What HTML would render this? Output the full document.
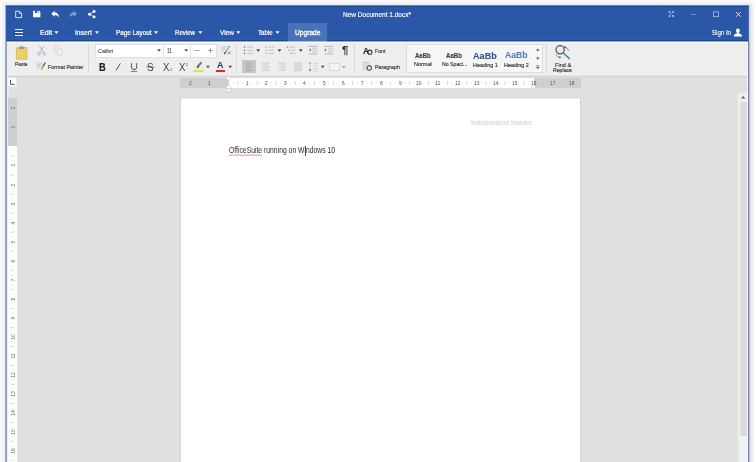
<!DOCTYPE html>
<html lang="en"><head><meta charset="utf-8"><title>New Document 1.docx - OfficeSuite</title>
<style>
html,body{margin:0;padding:0}
body{width:756px;height:462px;overflow:hidden;position:relative;background:#fbfbfb;font-family:"Liberation Sans", sans-serif}
.a{position:absolute}
.t{position:absolute;white-space:nowrap;transform-origin:0 0;display:block}
.sep{position:absolute;width:1px;top:44px;height:29px;background:#d9d9d9}
svg{position:absolute;overflow:visible}
</style></head><body>
<div class="a" style="left:0;top:0;width:5px;height:462px;background:linear-gradient(90deg,#fcf8f8 0px,#fcf8f8 1px,#fafafa 1px,#fafafa 2px,#f1f6fc 2px,#f1f6fc 3px,#ebf2fb 3px,#ebf2fb 4px,#e8f0f8 4px,#e8f0f8 5px)"></div>
<div class="a" style="left:750px;top:0;width:6px;height:462px;background:linear-gradient(90deg,#e0e4ea 0px,#e0e4ea 1px,#e9ecec 1px,#e9ecec 2px,#f0f2f2 2px,#f0f2f2 3px,#f6f6f6 3px,#f6f6f6 4px,#fbfbfb 4px,#fbfbfb 5px,#ffffff 5px,#ffffff 6px)"></div>
<div class="a" style="left:3px;top:0;width:749px;height:5px;background:linear-gradient(180deg,#fdf9fd 0px,#fdf9fd 1px,#fbf8f8 1px,#fbf8f8 2px,#f3f6ec 2px,#f3f6ec 3px,#eaf4f8 3px,#eaf4f8 4px,#e2f0fc 4px,#e2f0fc 5px)"></div>
<div class="a" style="left:0;top:0;width:3px;height:5px;background:#fcfafb"></div><div class="a" style="left:752px;top:0;width:4px;height:5px;background:#fcfcfc"></div>
<div id="win" class="a" style="left:5px;top:5px;width:745px;height:457px;background:#e0e0e0"></div>
<div id="titlebar" class="a" style="left:5px;top:5px;width:745px;height:37px;background:linear-gradient(180deg,#6a84b6 0,#6a84b6 1px,#274c9a 1px,#274c9a 2px,#2a57a7 2px,#2a57a7 33px,#2b5bb0 33px,#2b5bb0 35px,#21468e 35px,#21468e 36px,#8fa6d2 36px)"></div>
<div class="a" style="left:5px;top:5px;width:1px;height:37px;background:#9db0d2"></div>
<div class="a" style="left:748px;top:5px;width:1px;height:37px;background:#4f68a8"></div>
<div class="a" style="left:749px;top:5px;width:1px;height:37px;background:#c6d0ee"></div>
<div id="tab-upgrade" class="a" style="left:288px;top:23px;width:39px;height:18px;background:#4a72b8"></div>
<div class="a" style="left:288px;top:41px;width:39px;height:1px;background:#a5b8dc"></div>
<div id="ribbon" class="a" style="left:7px;top:42px;width:740px;height:33px;background:linear-gradient(180deg,#f9fbfb 0,#f9fbfb 1px,#eeeeee 1px,#eeeeee 32px,#f2f2f2 32px)"></div>
<div class="a" style="left:7px;top:75px;width:740px;height:1px;background:#e4e4e4"></div>
<div class="a" style="left:7px;top:76px;width:740px;height:1px;background:#d4d4d4"></div>
<div class="a" style="left:7px;top:77px;width:740px;height:1px;background:#dedede"></div>
<div class="a" style="left:5px;top:42px;width:3px;height:420px;background:linear-gradient(90deg,#a0aebf 0px,#a0aebf 1px,#92a1b6 1px,#92a1b6 2px,#e8ecf3 2px,#e8ecf3 3px)"></div>
<div class="a" style="left:8px;top:78px;width:1px;height:384px;background:#ebebed"></div>
<div class="a" style="left:747px;top:42px;width:3px;height:420px;background:linear-gradient(90deg,#f6fafa 0px,#f6fafa 1px,#7c81a6 1px,#7c81a6 2px,#b9bddc 2px,#b9bddc 3px)"></div>
<div id="vscroll" class="a" style="left:737px;top:93px;width:10px;height:369px;background:linear-gradient(90deg,#e6e4e4 0px,#e6e4e4 1px,#ebebe8 1px,#ebebe8 2px,#efeee9 2px,#efeee9 3px,#e4e4dd 3px,#e4e4dd 4px,#dbdbdf 4px,#dbdbdf 5px,#dbdbdf 5px,#dbdbdf 6px,#dbdbdf 6px,#dbdbdf 7px,#dbdbdf 7px,#dbdbdf 8px,#dbdbdf 8px,#dbdbdf 9px,#dbdbdf 9px,#dbdbdf 10px)"></div>
<div class="a" style="left:740px;top:436px;width:7px;height:26px;background:#f0f0f7"></div>
<div class="a" style="left:738px;top:93px;width:9px;height:9px;background:#efefef"></div><svg style="left:741.4px;top:95.8px" width="4.4" height="2.6" viewBox="0 0 4.4 2.6"><path d="M0 2.6 L2.2 0.1 L4.4 2.6Z" fill="#606060"/></svg>
<div id="hruler" class="a" style="left:180px;top:78px;width:401px;height:10px;background:linear-gradient(90deg,#cfcfcf 0,#cfcfcf 48.6px,#fff 48.6px,#fff 353.6px,#cfcfcf 353.6px)"></div>
<div id="vruler" class="a" style="left:8px;top:98px;width:9px;height:364px;background:linear-gradient(180deg,#cfcfcf 0,#cfcfcf 48px,#fff 48px)"></div>
<div id="tabsel" class="a" style="left:8px;top:78px;width:9px;height:9px;background:#fdfdfd;border-bottom:1px solid #e6e6e6;border-right:1px solid #ededed;box-sizing:border-box"></div>
<svg style="left:9px;top:79px" width="7" height="7" viewBox="0 0 7 7"><path d="M1.5 0.8 V5.4 H5.7" fill="none" stroke="#4a4a4a" stroke-width="0.9"/></svg>
<svg style="left:0;top:0" width="756" height="462" viewBox="0 0 756 462"><rect x="185.34" y="82.4" width="0.8" height="1.2" fill="#c4c4c4" opacity="0.6"/><rect x="194.86" y="82.4" width="0.8" height="1.2" fill="#c4c4c4" opacity="0.6"/><rect x="199.62" y="81.2" width="0.8" height="3.6" fill="#b9b9b9" opacity="0.7"/><rect x="204.39" y="82.4" width="0.8" height="1.2" fill="#c4c4c4" opacity="0.6"/><rect x="213.91" y="82.4" width="0.8" height="1.2" fill="#c4c4c4" opacity="0.6"/><rect x="218.67" y="81.2" width="0.8" height="3.6" fill="#b9b9b9" opacity="0.7"/><rect x="223.44" y="82.4" width="0.8" height="1.2" fill="#c4c4c4" opacity="0.6"/><rect x="232.96" y="82.4" width="0.8" height="1.2" fill="#c4c4c4" opacity="0.6"/><rect x="237.72" y="81.2" width="0.8" height="3.6" fill="#b9b9b9" opacity="0.7"/><rect x="242.49" y="82.4" width="0.8" height="1.2" fill="#c4c4c4" opacity="0.6"/><rect x="252.01" y="82.4" width="0.8" height="1.2" fill="#c4c4c4" opacity="0.6"/><rect x="256.78" y="81.2" width="0.8" height="3.6" fill="#b9b9b9" opacity="0.7"/><rect x="261.54" y="82.4" width="0.8" height="1.2" fill="#c4c4c4" opacity="0.6"/><rect x="271.06" y="82.4" width="0.8" height="1.2" fill="#c4c4c4" opacity="0.6"/><rect x="275.83" y="81.2" width="0.8" height="3.6" fill="#b9b9b9" opacity="0.7"/><rect x="280.59" y="82.4" width="0.8" height="1.2" fill="#c4c4c4" opacity="0.6"/><rect x="290.11" y="82.4" width="0.8" height="1.2" fill="#c4c4c4" opacity="0.6"/><rect x="294.88" y="81.2" width="0.8" height="3.6" fill="#b9b9b9" opacity="0.7"/><rect x="299.64" y="82.4" width="0.8" height="1.2" fill="#c4c4c4" opacity="0.6"/><rect x="309.16" y="82.4" width="0.8" height="1.2" fill="#c4c4c4" opacity="0.6"/><rect x="313.93" y="81.2" width="0.8" height="3.6" fill="#b9b9b9" opacity="0.7"/><rect x="318.69" y="82.4" width="0.8" height="1.2" fill="#c4c4c4" opacity="0.6"/><rect x="328.21" y="82.4" width="0.8" height="1.2" fill="#c4c4c4" opacity="0.6"/><rect x="332.98" y="81.2" width="0.8" height="3.6" fill="#b9b9b9" opacity="0.7"/><rect x="337.74" y="82.4" width="0.8" height="1.2" fill="#c4c4c4" opacity="0.6"/><rect x="347.26" y="82.4" width="0.8" height="1.2" fill="#c4c4c4" opacity="0.6"/><rect x="352.03" y="81.2" width="0.8" height="3.6" fill="#b9b9b9" opacity="0.7"/><rect x="356.79" y="82.4" width="0.8" height="1.2" fill="#c4c4c4" opacity="0.6"/><rect x="366.31" y="82.4" width="0.8" height="1.2" fill="#c4c4c4" opacity="0.6"/><rect x="371.08" y="81.2" width="0.8" height="3.6" fill="#b9b9b9" opacity="0.7"/><rect x="375.84" y="82.4" width="0.8" height="1.2" fill="#c4c4c4" opacity="0.6"/><rect x="385.36" y="82.4" width="0.8" height="1.2" fill="#c4c4c4" opacity="0.6"/><rect x="390.12" y="81.2" width="0.8" height="3.6" fill="#b9b9b9" opacity="0.7"/><rect x="394.89" y="82.4" width="0.8" height="1.2" fill="#c4c4c4" opacity="0.6"/><rect x="404.41" y="82.4" width="0.8" height="1.2" fill="#c4c4c4" opacity="0.6"/><rect x="409.18" y="81.2" width="0.8" height="3.6" fill="#b9b9b9" opacity="0.7"/><rect x="413.94" y="82.4" width="0.8" height="1.2" fill="#c4c4c4" opacity="0.6"/><rect x="423.46" y="82.4" width="0.8" height="1.2" fill="#c4c4c4" opacity="0.6"/><rect x="428.23" y="81.2" width="0.8" height="3.6" fill="#b9b9b9" opacity="0.7"/><rect x="432.99" y="82.4" width="0.8" height="1.2" fill="#c4c4c4" opacity="0.6"/><rect x="442.51" y="82.4" width="0.8" height="1.2" fill="#c4c4c4" opacity="0.6"/><rect x="447.28" y="81.2" width="0.8" height="3.6" fill="#b9b9b9" opacity="0.7"/><rect x="452.04" y="82.4" width="0.8" height="1.2" fill="#c4c4c4" opacity="0.6"/><rect x="461.56" y="82.4" width="0.8" height="1.2" fill="#c4c4c4" opacity="0.6"/><rect x="466.33" y="81.2" width="0.8" height="3.6" fill="#b9b9b9" opacity="0.7"/><rect x="471.09" y="82.4" width="0.8" height="1.2" fill="#c4c4c4" opacity="0.6"/><rect x="480.61" y="82.4" width="0.8" height="1.2" fill="#c4c4c4" opacity="0.6"/><rect x="485.38" y="81.2" width="0.8" height="3.6" fill="#b9b9b9" opacity="0.7"/><rect x="490.14" y="82.4" width="0.8" height="1.2" fill="#c4c4c4" opacity="0.6"/><rect x="499.66" y="82.4" width="0.8" height="1.2" fill="#c4c4c4" opacity="0.6"/><rect x="504.43" y="81.2" width="0.8" height="3.6" fill="#b9b9b9" opacity="0.7"/><rect x="509.19" y="82.4" width="0.8" height="1.2" fill="#c4c4c4" opacity="0.6"/><rect x="518.71" y="82.4" width="0.8" height="1.2" fill="#c4c4c4" opacity="0.6"/><rect x="523.48" y="81.2" width="0.8" height="3.6" fill="#b9b9b9" opacity="0.7"/><rect x="528.24" y="82.4" width="0.8" height="1.2" fill="#c4c4c4" opacity="0.6"/><rect x="537.76" y="82.4" width="0.8" height="1.2" fill="#c4c4c4" opacity="0.6"/><rect x="542.52" y="81.2" width="0.8" height="3.6" fill="#b9b9b9" opacity="0.7"/><rect x="547.29" y="82.4" width="0.8" height="1.2" fill="#c4c4c4" opacity="0.6"/><rect x="556.81" y="82.4" width="0.8" height="1.2" fill="#c4c4c4" opacity="0.6"/><rect x="561.58" y="81.2" width="0.8" height="3.6" fill="#b9b9b9" opacity="0.7"/><rect x="566.34" y="82.4" width="0.8" height="1.2" fill="#c4c4c4" opacity="0.6"/><rect x="575.86" y="82.4" width="0.8" height="1.2" fill="#c4c4c4" opacity="0.6"/><rect x="11.9" y="103.14" width="1.2" height="0.8" fill="#c8c8c8" opacity="0.6"/><rect x="11.9" y="112.66" width="1.2" height="0.8" fill="#c8c8c8" opacity="0.6"/><rect x="10.7" y="117.42" width="3.6" height="0.8" fill="#bdbdbd" opacity="0.7"/><rect x="11.9" y="122.19" width="1.2" height="0.8" fill="#c8c8c8" opacity="0.6"/><rect x="11.9" y="131.71" width="1.2" height="0.8" fill="#c8c8c8" opacity="0.6"/><rect x="10.7" y="136.47" width="3.6" height="0.8" fill="#bdbdbd" opacity="0.7"/><rect x="11.9" y="141.24" width="1.2" height="0.8" fill="#c8c8c8" opacity="0.6"/><rect x="11.9" y="150.76" width="1.2" height="0.8" fill="#c8c8c8" opacity="0.6"/><rect x="10.7" y="155.53" width="3.6" height="0.8" fill="#bdbdbd" opacity="0.7"/><rect x="11.9" y="160.29" width="1.2" height="0.8" fill="#c8c8c8" opacity="0.6"/><rect x="11.9" y="169.81" width="1.2" height="0.8" fill="#c8c8c8" opacity="0.6"/><rect x="10.7" y="174.58" width="3.6" height="0.8" fill="#bdbdbd" opacity="0.7"/><rect x="11.9" y="179.34" width="1.2" height="0.8" fill="#c8c8c8" opacity="0.6"/><rect x="11.9" y="188.86" width="1.2" height="0.8" fill="#c8c8c8" opacity="0.6"/><rect x="10.7" y="193.62" width="3.6" height="0.8" fill="#bdbdbd" opacity="0.7"/><rect x="11.9" y="198.39" width="1.2" height="0.8" fill="#c8c8c8" opacity="0.6"/><rect x="11.9" y="207.91" width="1.2" height="0.8" fill="#c8c8c8" opacity="0.6"/><rect x="10.7" y="212.67" width="3.6" height="0.8" fill="#bdbdbd" opacity="0.7"/><rect x="11.9" y="217.44" width="1.2" height="0.8" fill="#c8c8c8" opacity="0.6"/><rect x="11.9" y="226.96" width="1.2" height="0.8" fill="#c8c8c8" opacity="0.6"/><rect x="10.7" y="231.72" width="3.6" height="0.8" fill="#bdbdbd" opacity="0.7"/><rect x="11.9" y="236.49" width="1.2" height="0.8" fill="#c8c8c8" opacity="0.6"/><rect x="11.9" y="246.01" width="1.2" height="0.8" fill="#c8c8c8" opacity="0.6"/><rect x="10.7" y="250.78" width="3.6" height="0.8" fill="#bdbdbd" opacity="0.7"/><rect x="11.9" y="255.54" width="1.2" height="0.8" fill="#c8c8c8" opacity="0.6"/><rect x="11.9" y="265.06" width="1.2" height="0.8" fill="#c8c8c8" opacity="0.6"/><rect x="10.7" y="269.83" width="3.6" height="0.8" fill="#bdbdbd" opacity="0.7"/><rect x="11.9" y="274.59" width="1.2" height="0.8" fill="#c8c8c8" opacity="0.6"/><rect x="11.9" y="284.11" width="1.2" height="0.8" fill="#c8c8c8" opacity="0.6"/><rect x="10.7" y="288.88" width="3.6" height="0.8" fill="#bdbdbd" opacity="0.7"/><rect x="11.9" y="293.64" width="1.2" height="0.8" fill="#c8c8c8" opacity="0.6"/><rect x="11.9" y="303.16" width="1.2" height="0.8" fill="#c8c8c8" opacity="0.6"/><rect x="10.7" y="307.93" width="3.6" height="0.8" fill="#bdbdbd" opacity="0.7"/><rect x="11.9" y="312.69" width="1.2" height="0.8" fill="#c8c8c8" opacity="0.6"/><rect x="11.9" y="322.21" width="1.2" height="0.8" fill="#c8c8c8" opacity="0.6"/><rect x="10.7" y="326.98" width="3.6" height="0.8" fill="#bdbdbd" opacity="0.7"/><rect x="11.9" y="331.74" width="1.2" height="0.8" fill="#c8c8c8" opacity="0.6"/><rect x="11.9" y="341.26" width="1.2" height="0.8" fill="#c8c8c8" opacity="0.6"/><rect x="10.7" y="346.03" width="3.6" height="0.8" fill="#bdbdbd" opacity="0.7"/><rect x="11.9" y="350.79" width="1.2" height="0.8" fill="#c8c8c8" opacity="0.6"/><rect x="11.9" y="360.31" width="1.2" height="0.8" fill="#c8c8c8" opacity="0.6"/><rect x="10.7" y="365.08" width="3.6" height="0.8" fill="#bdbdbd" opacity="0.7"/><rect x="11.9" y="369.84" width="1.2" height="0.8" fill="#c8c8c8" opacity="0.6"/><rect x="11.9" y="379.36" width="1.2" height="0.8" fill="#c8c8c8" opacity="0.6"/><rect x="10.7" y="384.12" width="3.6" height="0.8" fill="#bdbdbd" opacity="0.7"/><rect x="11.9" y="388.89" width="1.2" height="0.8" fill="#c8c8c8" opacity="0.6"/><rect x="11.9" y="398.41" width="1.2" height="0.8" fill="#c8c8c8" opacity="0.6"/><rect x="10.7" y="403.18" width="3.6" height="0.8" fill="#bdbdbd" opacity="0.7"/><rect x="11.9" y="407.94" width="1.2" height="0.8" fill="#c8c8c8" opacity="0.6"/><rect x="11.9" y="417.46" width="1.2" height="0.8" fill="#c8c8c8" opacity="0.6"/><rect x="10.7" y="422.23" width="3.6" height="0.8" fill="#bdbdbd" opacity="0.7"/><rect x="11.9" y="426.99" width="1.2" height="0.8" fill="#c8c8c8" opacity="0.6"/><rect x="11.9" y="436.51" width="1.2" height="0.8" fill="#c8c8c8" opacity="0.6"/><rect x="10.7" y="441.28" width="3.6" height="0.8" fill="#bdbdbd" opacity="0.7"/><rect x="11.9" y="446.04" width="1.2" height="0.8" fill="#c8c8c8" opacity="0.6"/><rect x="11.9" y="455.56" width="1.2" height="0.8" fill="#c8c8c8" opacity="0.6"/><rect x="10.7" y="460.33" width="3.6" height="0.8" fill="#bdbdbd" opacity="0.7"/><path d="M226.3 76.6 H230.9 V78.4 L228.6 80.6 L226.3 78.4Z" fill="#fff" stroke="#c4c4c4" stroke-width="0.6"/><path d="M226.3 88.6 V87 L228.6 84.9 L230.9 87 V88.6Z" fill="#fff" stroke="#c4c4c4" stroke-width="0.6"/><rect x="226.3" y="89" width="4.6" height="2.8" fill="#fff" stroke="#c4c4c4" stroke-width="0.6"/><path d="M531.2 88.4 V87 L533.5 84.9 L535.8 87 V88.4Z" fill="#fff" stroke="#c4c4c4" stroke-width="0.6"/></svg>
<div id="page" class="a" style="left:181px;top:99px;width:399px;height:363px;background:#fff"></div>
<div class="a" style="left:180px;top:97px;width:401px;height:1px;background:#dadada"></div>
<div class="a" style="left:181px;top:98px;width:399px;height:1px;background:#eeeeee"></div>
<div class="a" style="left:180px;top:98px;width:1px;height:364px;background:#d4d4d4"></div>
<div class="a" style="left:580px;top:98px;width:1px;height:364px;background:#d4d4d4"></div>
<svg style="left:229px;top:154.4px" width="34" height="3" viewBox="0 0 34 3"><path d="M0 2 L1.0 0.5 L2.0 2.0 L3.0 0.5 L4.0 2.0 L5.0 0.5 L6.0 2.0 L7.0 0.5 L8.0 2.0 L9.0 0.5 L10.0 2.0 L11.0 0.5 L12.0 2.0 L13.0 0.5 L14.0 2.0 L15.0 0.5 L16.0 2.0 L17.0 0.5 L18.0 2.0 L19.0 0.5 L20.0 2.0 L21.0 0.5 L22.0 2.0 L23.0 0.5 L24.0 2.0 L25.0 0.5 L26.0 2.0 L27.0 0.5 L28.0 2.0 L29.0 0.5 L30.0 2.0 L31.0 0.5 L32.0 2.0 L33.0 0.5" fill="none" stroke="#e03c3c" stroke-width="0.6" stroke-dasharray="1.2 0.5"/></svg>
<div class="a" style="left:305.4px;top:145.5px;width:1px;height:10.5px;background:#555"></div>
<div class="sep" style="left:88px"></div>
<div class="sep" style="left:236px"></div>
<div class="sep" style="left:354px"></div>
<div class="sep" style="left:546px"></div>
<div id="fontbox" class="a" style="left:95px;top:44px;width:122px;height:13.5px;background:#fff;border:1px solid #e0e0e0;box-sizing:border-box"></div>
<div class="a" style="left:163px;top:45px;width:1px;height:11.5px;background:#e3e3e3"></div>
<div class="a" style="left:190px;top:45px;width:1px;height:11.5px;background:#e3e3e3"></div>
<div id="gallery" class="a" style="left:406px;top:43.5px;width:137px;height:29.5px;background:#f6f6f6;border:1px solid #dedede;box-sizing:border-box"></div>
<div class="a" style="left:242.4px;top:59.8px;width:14px;height:13.2px;background:#c7c7c7"></div>
<div class="a" style="left:329px;top:62.5px;width:10.5px;height:8.5px;background:#f6f6f6;border:1px solid #d9d9d9;box-sizing:border-box"></div>
<svg id="icons" style="left:0;top:0" width="756" height="462" viewBox="0 0 756 462">
<g fill="none" stroke="#fff" stroke-width="0.9" opacity="0.92"><path d="M15.7 11.2 H19.4 L21.6 13.4 V17.6 H15.7Z"/><path d="M19.3 11.3 V13.5 H21.5" stroke-width="0.7"/></g>
<path d="M33.1 10.7 H39.2 L40.4 11.9 V17.3 H33.1Z M35 10.7 V13 H38.4 V10.7Z" fill="#fff" fill-rule="evenodd"/><rect x="36.9" y="11" width="0.9" height="1.6" fill="#fff"/>
<path transform="translate(51.20,10.7)" d="M0 3 L3.5 0 V1.9 C6.3 1.9 7.8 4 7.8 6.8 C6.9 5 5.6 4.2 3.5 4.2 V6 Z" fill="#fff"/>
<path transform="translate(77.10,10.7) scale(-1,1)" d="M0 3 L3.5 0 V1.9 C6.3 1.9 7.8 4 7.8 6.8 C6.9 5 5.6 4.2 3.5 4.2 V6 Z" fill="#819cd0"/>
<g fill="#fff"><circle cx="94.1" cy="11.5" r="1.45"/><circle cx="89.5" cy="14.2" r="1.45"/><circle cx="94.1" cy="16.9" r="1.45"/></g><path d="M94.1 11.5 L89.5 14.2 L94.1 16.9" fill="none" stroke="#fff" stroke-width="0.8"/>
<path d="M15 29.5 H23 M15 32.4 H23 M15 35.4 H23" stroke="#fff" stroke-width="1.05" opacity="0.92"/>
<path d="M54.30 31.25 L58.50 31.25 L56.40 33.95Z" fill="#fff" opacity="0.95"/>
<path d="M94.90 31.25 L99.10 31.25 L97.00 33.95Z" fill="#fff" opacity="0.95"/>
<path d="M153.90 31.25 L158.10 31.25 L156.00 33.95Z" fill="#fff" opacity="0.95"/>
<path d="M198.20 31.25 L202.40 31.25 L200.30 33.95Z" fill="#fff" opacity="0.95"/>
<path d="M236.20 31.25 L240.40 31.25 L238.30 33.95Z" fill="#fff" opacity="0.95"/>
<path d="M275.40 31.25 L279.60 31.25 L277.50 33.95Z" fill="#fff" opacity="0.95"/>
<g stroke="#fff" stroke-width="0.8" opacity="0.85" fill="none"><path d="M669.2 11.8 L670.8 13.4 M673.4 11.8 L671.8 13.4 M669.2 16.4 L670.8 14.8 M673.4 16.4 L671.8 14.8"/><path d="M669 13 V11.6 H670.4 M672.2 11.6 H673.6 V13 M669 15.2 V16.6 H670.4 M672.2 16.6 H673.6 V15.2" stroke-width="0.6"/></g>
<path d="M691 14.4 H696" stroke="#fff" stroke-width="0.7" opacity="0.55"/>
<rect x="713.5" y="11.9" width="4.8" height="4.8" fill="none" stroke="#fff" stroke-width="0.7" opacity="0.7"/>
<path d="M736 12 L740.8 16.8 M740.8 12 L736 16.8" stroke="#fff" stroke-width="0.9" opacity="0.9"/>
<g fill="#fff"><ellipse cx="737.9" cy="30.7" rx="1.9" ry="2.2"/><path d="M733.7 36.5 C733.7 34.3 735.4 33.9 736.8 33.5 L737.9 32.5 L739 33.5 C740.4 33.9 742.1 34.3 742.1 36.5Z"/></g>
<rect x="16.4" y="47.6" width="10.5" height="11.7" rx="0.6" fill="#ecd066" stroke="#c8b25a" stroke-width="0.7"/>
<path d="M19 49 V47.2 H20.4 V45.9 H22.9 V47.2 H24.3 V49Z" fill="#9b9b9b"/>
<g fill="none" stroke="#97a3b6" stroke-width="0.75"><path d="M39.3 45.9 L43.9 52.8 M44.1 45.9 L39.5 52.8"/><circle cx="39.1" cy="53.7" r="1.35"/><circle cx="44.3" cy="53.7" r="1.35"/></g>
<g fill="#efefef" stroke="#d2d2d2" stroke-width="0.8"><path d="M54.7 46.4 H58.3 L59.8 47.9 V52.6 H54.7Z"/><path d="M57.2 49 H60.6 L62 50.5 V55.2 H57.2Z"/></g>
<g stroke="#a9b7cf" stroke-width="0.7" fill="none"><path d="M36.8 63 H42.4 M36.8 64.6 H41.2 M36.8 66.2 H40.2 M36.8 67.8 H39.4"/></g>
<path d="M45.4 62.6 L42 67.6" stroke="#4a4a4a" stroke-width="1.1"/><path d="M42.3 67 L40.4 70.4 L43.4 68.3Z" fill="#eaa637"/><path d="M43.2 66.2 L41.4 69.4" stroke="#eaa637" stroke-width="1.7"/>
<path d="M157.05 49.15 L160.95 49.15 L159.00 51.65Z" fill="#505050" opacity="1"/>
<path d="M184.25 49.15 L188.15 49.15 L186.20 51.65Z" fill="#505050" opacity="1"/>
<path d="M194.3 50.5 H199.6 M207.9 50.5 H213 M210.45 47.9 V53.1" stroke="#808080" stroke-width="0.7"/>
<path d="M221.2 47 H226.6 M221.2 48.9 H225.6 M221.2 50.8 H224.4" stroke="#b2b2b2" stroke-width="0.7"/>
<path d="M229.6 45.9 L225 53.3" stroke="#777" stroke-width="1"/><path d="M225.6 52 L224.3 54.1" stroke="#444" stroke-width="1.2"/>
<path d="M227.8 51.4 L230.6 54.2 M230.6 51.4 L227.8 54.2" stroke="#e04848" stroke-width="0.8"/>
<path d="M120.4 63.3 L116.2 70.2" stroke="#444" stroke-width="0.95"/>
<path d="M131.4 63.2 V67 A2.65 2.65 0 0 0 136.7 67 V63.2" fill="none" stroke="#4a4a4a" stroke-width="0.9"/><path d="M130.8 71.4 H137.3" stroke="#4a4a4a" stroke-width="0.7"/>
<path d="M146.2 66.9 H154.2" stroke="#4a4a4a" stroke-width="0.7"/>
<path d="M201.6 62.2 L197.6 66.6" stroke="#7d7d7d" stroke-width="2.1"/><path d="M198.2 65.4 L196 68.2 L199.4 67Z" fill="#333"/>
<rect x="193.3" y="70" width="10.5" height="2" fill="#e2e53e"/>
<path d="M206.10 65.85 L209.90 65.85 L208.00 68.35Z" fill="#505050" opacity="1"/>
<rect x="215.9" y="70" width="9.1" height="2" fill="#e02a2a"/>
<path d="M228.30 65.85 L232.10 65.85 L230.20 68.35Z" fill="#505050" opacity="1"/>
<rect x="243.9" y="46.45" width="1.2" height="1.2" fill="#3b5686"/>
<path d="M247.2 47.10 H253.1" stroke="#a6b0c4" stroke-width="0.7"/>
<rect x="243.9" y="49.65" width="1.2" height="1.2" fill="#3b5686"/>
<path d="M247.2 50.30 H253.1" stroke="#a6b0c4" stroke-width="0.7"/>
<rect x="243.9" y="52.75" width="1.2" height="1.2" fill="#3b5686"/>
<path d="M247.2 53.40 H253.1" stroke="#a6b0c4" stroke-width="0.7"/>
<path d="M256.25 49.30 L260.15 49.30 L258.20 51.90Z" fill="#505050" opacity="1"/>
<rect x="265.5" y="46.25" width="1" height="1.6" fill="#9aa6bd"/>
<path d="M268.4 47.10 H274" stroke="#a6b0c4" stroke-width="0.7"/>
<rect x="265.5" y="49.45" width="1" height="1.6" fill="#9aa6bd"/>
<path d="M268.4 50.30 H274" stroke="#a6b0c4" stroke-width="0.7"/>
<rect x="265.5" y="52.55" width="1" height="1.6" fill="#9aa6bd"/>
<path d="M268.4 53.40 H274" stroke="#a6b0c4" stroke-width="0.7"/>
<path d="M277.55 49.30 L281.45 49.30 L279.50 51.90Z" fill="#505050" opacity="1"/>
<rect x="286.90" y="46.25" width="1" height="1.6" fill="#6f93cf"/>
<path d="M289.10 47.10 H295.4" stroke="#a6b0c4" stroke-width="0.7"/>
<rect x="288.80" y="49.45" width="1" height="1.6" fill="#6f93cf"/>
<path d="M291.00 50.30 H295.4" stroke="#a6b0c4" stroke-width="0.7"/>
<rect x="290.70" y="52.55" width="1" height="1.6" fill="#6f93cf"/>
<path d="M292.90 53.40 H295.4" stroke="#a6b0c4" stroke-width="0.7"/>
<path d="M298.85 49.30 L302.75 49.30 L300.80 51.90Z" fill="#505050" opacity="1"/>
<path d="M308.60 46.3 H317.30 M308.60 53.9 H317.30" stroke="#a3a8b5" stroke-width="0.75"/>
<path d="M312.20 48.2 H317.30 M312.20 50.1 H317.30 M312.20 52 H317.30" stroke="#adb2bf" stroke-width="0.6"/>
<path d="M310.80 48.8 L309.10 50.1 L310.80 51.4Z" fill="#8a3d3d"/>
<path d="M324.40 46.3 H333.10 M324.40 53.9 H333.10" stroke="#a3a8b5" stroke-width="0.75"/>
<path d="M328.00 48.2 H333.10 M328.00 50.1 H333.10 M328.00 52 H333.10" stroke="#adb2bf" stroke-width="0.6"/>
<path d="M324.90 48.8 L326.60 50.1 L324.90 51.4Z" fill="#8a3d3d"/>
<path d="M245.60 63.00 H253.20" stroke="#9a9a9a" stroke-width="0.65"/>
<path d="M245.60 64.90 H250.54" stroke="#9a9a9a" stroke-width="0.65"/>
<path d="M245.60 66.80 H253.20" stroke="#9a9a9a" stroke-width="0.65"/>
<path d="M245.60 68.70 H250.54" stroke="#9a9a9a" stroke-width="0.65"/>
<path d="M245.60 70.40 H253.20" stroke="#9a9a9a" stroke-width="0.65"/>
<path d="M261.50 63.00 H270.00" stroke="#bcbcbc" stroke-width="0.65"/>
<path d="M263.03 64.90 H268.47" stroke="#bcbcbc" stroke-width="0.65"/>
<path d="M261.50 66.80 H270.00" stroke="#bcbcbc" stroke-width="0.65"/>
<path d="M263.03 68.70 H268.47" stroke="#bcbcbc" stroke-width="0.65"/>
<path d="M261.50 70.40 H270.00" stroke="#bcbcbc" stroke-width="0.65"/>
<path d="M278.00 63.00 H285.60" stroke="#bcbcbc" stroke-width="0.65"/>
<path d="M280.66 64.90 H285.60" stroke="#bcbcbc" stroke-width="0.65"/>
<path d="M278.00 66.80 H285.60" stroke="#bcbcbc" stroke-width="0.65"/>
<path d="M280.66 68.70 H285.60" stroke="#bcbcbc" stroke-width="0.65"/>
<path d="M278.00 70.40 H285.60" stroke="#bcbcbc" stroke-width="0.65"/>
<path d="M293.90 63.00 H302.00" stroke="#b8b8b8" stroke-width="0.65"/>
<path d="M293.90 64.90 H302.00" stroke="#b8b8b8" stroke-width="0.65"/>
<path d="M293.90 66.80 H302.00" stroke="#b8b8b8" stroke-width="0.65"/>
<path d="M293.90 68.70 H302.00" stroke="#b8b8b8" stroke-width="0.65"/>
<path d="M293.90 70.40 H302.00" stroke="#b8b8b8" stroke-width="0.65"/>
<path d="M310 63 V70.4" stroke="#a9bddb" stroke-width="0.7"/><path d="M308.6 63.8 L310 62 L311.4 63.8Z" fill="#8aa6cc"/><path d="M308.6 69.6 L310 71.4 L311.4 69.6Z" fill="#5f7391"/>
<path d="M312.8 63.4 H317.9 M312.8 65.9 H317.9 M312.8 68.4 H317.9 M312.8 70.9 H317.9" stroke="#c2c2c2" stroke-width="0.6"/>
<path d="M320.80 65.85 L324.60 65.85 L322.70 68.35Z" fill="#505050" opacity="1"/>
<path d="M334.25 63.4 V70.2 M329.8 66.75 H338.8" stroke="#ededed" stroke-width="0.6"/>
<path d="M342.00 66.00 L345.60 66.00 L343.80 68.20Z" fill="#a0a0a0" opacity="1"/>
<circle cx="369.9" cy="52.2" r="2.05" fill="#eeeeee" stroke="#3a3a3a" stroke-width="1.1"/>
<path d="M363 62.4 H369.4 M365 64 H369.4" stroke="#b5b5b5" stroke-width="0.7"/><path d="M363.4 62.4 V70.4 M365.2 64 V70.4" stroke="#c0c0c0" stroke-width="0.7"/>
<circle cx="369.2" cy="68" r="2.2" fill="#efefef" stroke="#444" stroke-width="1.05"/><path d="M369.2 65 V66" stroke="#444" stroke-width="1"/>
<path d="M536.05 50.70 L537.80 48.50 L539.55 50.70Z" fill="#505050" opacity="1"/>
<path d="M536.05 57.50 L539.55 57.50 L537.80 59.70Z" fill="#505050" opacity="1"/>
<path d="M536.2 65.8 H539.4" stroke="#555" stroke-width="0.7"/>
<path d="M536.05 66.90 L539.55 66.90 L537.80 69.10Z" fill="#505050" opacity="1"/>
<circle cx="560.1" cy="49.8" r="4.1" fill="none" stroke="#2c5f7e" stroke-width="1.25"/>
<path d="M563.2 53 L569.8 58.9" stroke="#3f86a4" stroke-width="1.5"/>
<path d="M568.3 50.8 C568 48.6 566.8 47.4 565 47.2" fill="none" stroke="#d84a4a" stroke-width="0.9"/><path d="M565.6 45.8 L563.4 47.2 L565.6 48.6Z" fill="#cf3a3a"/>
<path d="M556.2 54.4 C556.6 56.2 557.8 57.1 559.6 57.3" fill="none" stroke="#d84a4a" stroke-width="0.9"/><path d="M559.2 55.9 L561.4 57.3 L559.2 58.7Z" fill="#cf3a3a"/>
</svg>
<div id="labels" class="a" style="left:0;top:0;width:756px;height:462px;will-change:transform">
<span class="t" id="t0" style="left:343.30px;top:11.11px;font-size:28.58px;line-height:28.58px;color:#fff;font-weight:400;transform:scale(0.2277,0.2500);-webkit-text-stroke:0.60px #fff">New Document 1.docx*</span>
<span class="t" id="t1" style="left:40.00px;top:28.72px;font-size:29.33px;line-height:29.33px;color:#fff;font-weight:400;transform:scale(0.2414,0.2500);-webkit-text-stroke:0.88px #fff">Edit</span>
<span class="t" id="t2" style="left:75.40px;top:28.72px;font-size:29.33px;line-height:29.33px;color:#fff;font-weight:400;transform:scale(0.2290,0.2500);-webkit-text-stroke:0.88px #fff">Insert</span>
<span class="t" id="t3" style="left:115.50px;top:28.72px;font-size:29.33px;line-height:29.33px;color:#fff;font-weight:400;transform:scale(0.2155,0.2500);-webkit-text-stroke:0.88px #fff">Page Layout</span>
<span class="t" id="t4" style="left:175.30px;top:28.72px;font-size:29.33px;line-height:29.33px;color:#fff;font-weight:400;transform:scale(0.2069,0.2500);-webkit-text-stroke:0.88px #fff">Review</span>
<span class="t" id="t5" style="left:219.70px;top:28.72px;font-size:29.33px;line-height:29.33px;color:#fff;font-weight:400;transform:scale(0.2205,0.2500);-webkit-text-stroke:0.88px #fff">View</span>
<span class="t" id="t6" style="left:258.00px;top:28.72px;font-size:29.33px;line-height:29.33px;color:#fff;font-weight:400;transform:scale(0.2082,0.2500);-webkit-text-stroke:0.88px #fff">Table</span>
<span class="t" id="t7" style="left:294.70px;top:28.72px;font-size:29.33px;line-height:29.33px;color:#fff;font-weight:400;transform:scale(0.2266,0.2500);-webkit-text-stroke:1.20px #fff">Upgrade</span>
<span class="t" id="t8" style="left:712.00px;top:29.20px;font-size:27.82px;line-height:27.82px;color:#fff;font-weight:400;transform:scale(0.2194,0.2500);-webkit-text-stroke:0.40px #fff">Sign In</span>
<span class="t" id="t9" style="left:15.40px;top:61.47px;font-size:24.82px;line-height:24.82px;color:#383838;font-weight:400;transform:scale(0.1986,0.2500);-webkit-text-stroke:0.72px #383838">Paste</span>
<span class="t" id="t10" style="left:48.40px;top:63.97px;font-size:24.82px;line-height:24.82px;color:#383838;font-weight:400;transform:scale(0.2157,0.2500);-webkit-text-stroke:0.72px #383838">Format Painter</span>
<span class="t" id="t11" style="left:97.90px;top:47.57px;font-size:24.82px;line-height:24.82px;color:#484848;font-weight:400;transform:scale(0.2176,0.2500);-webkit-text-stroke:0.48px #484848">Calibri</span>
<span class="t" id="t12" style="left:166.90px;top:47.38px;font-size:26.40px;line-height:26.40px;color:#444;font-weight:400;transform:scale(0.1861,0.2500);-webkit-text-stroke:0.40px #444">11</span>
<span class="t" id="t13" style="left:98.90px;top:61.62px;font-size:40.80px;line-height:40.80px;color:#222;font-weight:700;transform:scale(0.2274,0.2500);-webkit-text-stroke:0.80px #222">B</span>
<span class="t" id="t14" style="left:374.70px;top:47.87px;font-size:24.82px;line-height:24.82px;color:#383838;font-weight:400;transform:scale(0.2115,0.2500);-webkit-text-stroke:0.72px #383838">Font</span>
<span class="t" id="t15" style="left:374.70px;top:63.97px;font-size:24.82px;line-height:24.82px;color:#383838;font-weight:400;transform:scale(0.2149,0.2500);-webkit-text-stroke:0.72px #383838">Paragraph</span>
<span class="t" id="t16" style="left:415.20px;top:51.99px;font-size:29.60px;line-height:29.60px;color:#3a3a3a;font-weight:700;transform:scale(0.2032,0.2500);-webkit-text-stroke:0.48px #3a3a3a">AaBb</span>
<span class="t" id="t17" style="left:414.00px;top:61.36px;font-size:24.06px;line-height:24.06px;color:#383838;font-weight:400;transform:scale(0.2284,0.2500);-webkit-text-stroke:0.72px #383838">Normal</span>
<span class="t" id="t18" style="left:446.30px;top:51.99px;font-size:29.60px;line-height:29.60px;color:#3a3a3a;font-weight:700;transform:scale(0.2057,0.2500);-webkit-text-stroke:0.48px #3a3a3a">AaBb</span>
<span class="t" id="t19" style="left:441.90px;top:61.36px;font-size:24.06px;line-height:24.06px;color:#383838;font-weight:400;transform:scale(0.2159,0.2500);-webkit-text-stroke:0.72px #383838">No Spaci...</span>
<span class="t" id="t20" style="left:473.40px;top:50.90px;font-size:35.20px;line-height:35.20px;color:#2f5597;font-weight:700;transform:scale(0.2590,0.2500);-webkit-text-stroke:0.40px #2f5597">AaBb</span>
<span class="t" id="t21" style="left:473.00px;top:61.56px;font-size:24.06px;line-height:24.06px;color:#383838;font-weight:400;transform:scale(0.2253,0.2500);-webkit-text-stroke:0.72px #383838">Heading 1</span>
<span class="t" id="t22" style="left:505.30px;top:51.29px;font-size:32.80px;line-height:32.80px;color:#4f82cc;font-weight:700;transform:scale(0.2638,0.2500);-webkit-text-stroke:0.40px #4f82cc">AaBb</span>
<span class="t" id="t23" style="left:504.40px;top:61.56px;font-size:24.06px;line-height:24.06px;color:#383838;font-weight:400;transform:scale(0.2262,0.2500);-webkit-text-stroke:0.72px #383838">Heading 2</span>
<span class="t" id="t24" style="left:554.60px;top:61.56px;font-size:24.06px;line-height:24.06px;color:#383838;font-weight:400;transform:scale(0.2331,0.2500);-webkit-text-stroke:0.72px #383838">Find &amp;</span>
<span class="t" id="t25" style="left:553.30px;top:67.16px;font-size:24.06px;line-height:24.06px;color:#383838;font-weight:400;transform:scale(0.2153,0.2500);-webkit-text-stroke:0.72px #383838">Replace</span>
<span class="t" id="t26" style="left:147.00px;top:61.62px;font-size:40.80px;line-height:40.80px;color:#444;font-weight:400;transform:scale(0.2425,0.2500);">S</span>
<span class="t" id="t27" style="left:162.90px;top:61.71px;font-size:40.00px;line-height:40.00px;color:#444;font-weight:400;transform:scale(0.2398,0.2500);">X</span>
<span class="t" id="t28" style="left:169.50px;top:67.05px;font-size:17.60px;line-height:17.60px;color:#444;font-weight:400;transform:scale(0.2144,0.2500);">2</span>
<span class="t" id="t29" style="left:179.10px;top:61.71px;font-size:40.00px;line-height:40.00px;color:#444;font-weight:400;transform:scale(0.2398,0.2500);">X</span>
<span class="t" id="t30" style="left:185.60px;top:62.05px;font-size:17.60px;line-height:17.60px;color:#444;font-weight:400;transform:scale(0.2144,0.2500);">2</span>
<span class="t" id="t31" style="left:217.20px;top:61.15px;font-size:33.20px;line-height:33.20px;color:#2b3c6e;font-weight:700;transform:scale(0.2712,0.2500);">A</span>
<span class="t" id="t32" style="left:342.00px;top:45.27px;font-size:42.00px;line-height:42.00px;color:#333;font-weight:700;transform:scale(0.2783,0.2500);">¶</span>
<span class="t" id="t33" style="left:362.50px;top:45.51px;font-size:38.40px;line-height:38.40px;color:#2a2a2a;font-weight:700;transform:scale(0.2199,0.2500);-webkit-text-stroke:0.60px #2a2a2a">A</span>
<span class="t" id="t34" style="left:470.80px;top:118.69px;font-size:26.32px;line-height:26.32px;color:#d9d9d9;font-weight:700;transform:scale(0.2448,0.2500);">independent header</span>
<span class="t" id="t35" style="left:229.20px;top:145.69px;font-size:32.80px;line-height:32.80px;color:#2a2a2a;font-weight:400;transform:scale(0.2074,0.2500);">OfficeSuite running on Windows 10</span>
<span class="t" id="t36" style="left:208.20px;top:81.06px;font-size:20.00px;line-height:20.00px;color:#505050;font-weight:400;transform:scale(0.2427,0.2500);">1</span>
<span class="t" id="t37" style="left:189.15px;top:81.06px;font-size:20.00px;line-height:20.00px;color:#505050;font-weight:400;transform:scale(0.2427,0.2500);">2</span>
<span class="t" id="t38" style="left:246.30px;top:81.06px;font-size:20.00px;line-height:20.00px;color:#505050;font-weight:400;transform:scale(0.2427,0.2500);">1</span>
<span class="t" id="t39" style="left:265.35px;top:81.06px;font-size:20.00px;line-height:20.00px;color:#505050;font-weight:400;transform:scale(0.2427,0.2500);">2</span>
<span class="t" id="t40" style="left:284.40px;top:81.06px;font-size:20.00px;line-height:20.00px;color:#505050;font-weight:400;transform:scale(0.2427,0.2500);">3</span>
<span class="t" id="t41" style="left:303.45px;top:81.06px;font-size:20.00px;line-height:20.00px;color:#505050;font-weight:400;transform:scale(0.2427,0.2500);">4</span>
<span class="t" id="t42" style="left:322.50px;top:81.06px;font-size:20.00px;line-height:20.00px;color:#505050;font-weight:400;transform:scale(0.2427,0.2500);">5</span>
<span class="t" id="t43" style="left:341.55px;top:81.06px;font-size:20.00px;line-height:20.00px;color:#505050;font-weight:400;transform:scale(0.2427,0.2500);">6</span>
<span class="t" id="t44" style="left:360.60px;top:81.06px;font-size:20.00px;line-height:20.00px;color:#505050;font-weight:400;transform:scale(0.2427,0.2500);">7</span>
<span class="t" id="t45" style="left:379.65px;top:81.06px;font-size:20.00px;line-height:20.00px;color:#505050;font-weight:400;transform:scale(0.2427,0.2500);">8</span>
<span class="t" id="t46" style="left:398.70px;top:81.06px;font-size:20.00px;line-height:20.00px;color:#505050;font-weight:400;transform:scale(0.2427,0.2500);">9</span>
<span class="t" id="t47" style="left:416.40px;top:81.06px;font-size:20.00px;line-height:20.00px;color:#505050;font-weight:400;transform:scale(0.2427,0.2500);">10</span>
<span class="t" id="t48" style="left:435.45px;top:81.06px;font-size:20.00px;line-height:20.00px;color:#505050;font-weight:400;transform:scale(0.2600,0.2500);">11</span>
<span class="t" id="t49" style="left:454.50px;top:81.06px;font-size:20.00px;line-height:20.00px;color:#505050;font-weight:400;transform:scale(0.2427,0.2500);">12</span>
<span class="t" id="t50" style="left:473.55px;top:81.06px;font-size:20.00px;line-height:20.00px;color:#505050;font-weight:400;transform:scale(0.2427,0.2500);">13</span>
<span class="t" id="t51" style="left:492.60px;top:81.06px;font-size:20.00px;line-height:20.00px;color:#505050;font-weight:400;transform:scale(0.2427,0.2500);">14</span>
<span class="t" id="t52" style="left:511.65px;top:81.06px;font-size:20.00px;line-height:20.00px;color:#505050;font-weight:400;transform:scale(0.2427,0.2500);">15</span>
<span class="t" id="t53" style="left:530.70px;top:81.06px;font-size:20.00px;line-height:20.00px;color:#505050;font-weight:400;transform:scale(0.2427,0.2500);">16</span>
<span class="t" id="t54" style="left:549.75px;top:81.06px;font-size:20.00px;line-height:20.00px;color:#505050;font-weight:400;transform:scale(0.2427,0.2500);">17</span>
<span class="t" id="t55" style="left:568.80px;top:81.06px;font-size:20.00px;line-height:20.00px;color:#505050;font-weight:400;transform:scale(0.2427,0.2500);">18</span>
<div class="a" style="left:-5.5px;top:92.30px;width:36px;height:32px;line-height:32px;font-size:20px;color:#6a6a6a;text-align:center;transform:rotate(-90deg) scale(0.25);transform-origin:50% 50%">2</div>
<div class="a" style="left:-5.5px;top:111.35px;width:36px;height:32px;line-height:32px;font-size:20px;color:#6a6a6a;text-align:center;transform:rotate(-90deg) scale(0.25);transform-origin:50% 50%">1</div>
<div class="a" style="left:-5.5px;top:149.45px;width:36px;height:32px;line-height:32px;font-size:20px;color:#6a6a6a;text-align:center;transform:rotate(-90deg) scale(0.25);transform-origin:50% 50%">1</div>
<div class="a" style="left:-5.5px;top:168.50px;width:36px;height:32px;line-height:32px;font-size:20px;color:#6a6a6a;text-align:center;transform:rotate(-90deg) scale(0.25);transform-origin:50% 50%">2</div>
<div class="a" style="left:-5.5px;top:187.55px;width:36px;height:32px;line-height:32px;font-size:20px;color:#6a6a6a;text-align:center;transform:rotate(-90deg) scale(0.25);transform-origin:50% 50%">3</div>
<div class="a" style="left:-5.5px;top:206.60px;width:36px;height:32px;line-height:32px;font-size:20px;color:#6a6a6a;text-align:center;transform:rotate(-90deg) scale(0.25);transform-origin:50% 50%">4</div>
<div class="a" style="left:-5.5px;top:225.65px;width:36px;height:32px;line-height:32px;font-size:20px;color:#6a6a6a;text-align:center;transform:rotate(-90deg) scale(0.25);transform-origin:50% 50%">5</div>
<div class="a" style="left:-5.5px;top:244.70px;width:36px;height:32px;line-height:32px;font-size:20px;color:#6a6a6a;text-align:center;transform:rotate(-90deg) scale(0.25);transform-origin:50% 50%">6</div>
<div class="a" style="left:-5.5px;top:263.75px;width:36px;height:32px;line-height:32px;font-size:20px;color:#6a6a6a;text-align:center;transform:rotate(-90deg) scale(0.25);transform-origin:50% 50%">7</div>
<div class="a" style="left:-5.5px;top:282.80px;width:36px;height:32px;line-height:32px;font-size:20px;color:#6a6a6a;text-align:center;transform:rotate(-90deg) scale(0.25);transform-origin:50% 50%">8</div>
<div class="a" style="left:-5.5px;top:301.85px;width:36px;height:32px;line-height:32px;font-size:20px;color:#6a6a6a;text-align:center;transform:rotate(-90deg) scale(0.25);transform-origin:50% 50%">9</div>
<div class="a" style="left:-5.5px;top:320.90px;width:36px;height:32px;line-height:32px;font-size:20px;color:#6a6a6a;text-align:center;transform:rotate(-90deg) scale(0.25);transform-origin:50% 50%">10</div>
<div class="a" style="left:-5.5px;top:339.95px;width:36px;height:32px;line-height:32px;font-size:20px;color:#6a6a6a;text-align:center;transform:rotate(-90deg) scale(0.25);transform-origin:50% 50%">11</div>
<div class="a" style="left:-5.5px;top:359.00px;width:36px;height:32px;line-height:32px;font-size:20px;color:#6a6a6a;text-align:center;transform:rotate(-90deg) scale(0.25);transform-origin:50% 50%">12</div>
<div class="a" style="left:-5.5px;top:378.05px;width:36px;height:32px;line-height:32px;font-size:20px;color:#6a6a6a;text-align:center;transform:rotate(-90deg) scale(0.25);transform-origin:50% 50%">13</div>
<div class="a" style="left:-5.5px;top:397.10px;width:36px;height:32px;line-height:32px;font-size:20px;color:#6a6a6a;text-align:center;transform:rotate(-90deg) scale(0.25);transform-origin:50% 50%">14</div>
<div class="a" style="left:-5.5px;top:416.15px;width:36px;height:32px;line-height:32px;font-size:20px;color:#6a6a6a;text-align:center;transform:rotate(-90deg) scale(0.25);transform-origin:50% 50%">15</div>
<div class="a" style="left:-5.5px;top:435.20px;width:36px;height:32px;line-height:32px;font-size:20px;color:#6a6a6a;text-align:center;transform:rotate(-90deg) scale(0.25);transform-origin:50% 50%">16</div>
</div>
</body></html>
